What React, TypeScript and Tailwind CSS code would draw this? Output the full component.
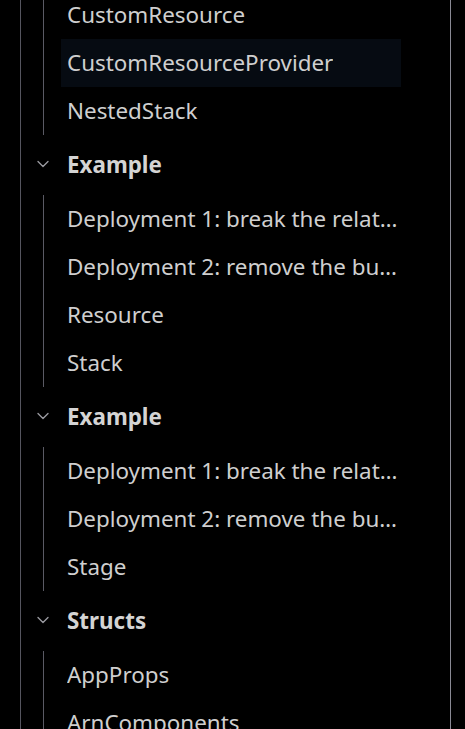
import { ChevronDown } from "lucide-react";

type Group = { title: string | null; items: string[]; active?: string };

const groups: Group[] = [
  {
    title: null,
    items: ["CustomResource", "CustomResourceProvider", "NestedStack"],
    active: "CustomResourceProvider",
  },
  {
    title: "Example",
    items: [
      "Deployment 1: break the relationship",
      "Deployment 2: remove the bucket",
      "Resource",
      "Stack",
    ],
  },
  {
    title: "Example",
    items: [
      "Deployment 1: break the relationship",
      "Deployment 2: remove the bucket",
      "Stage",
    ],
  },
  { title: "Structs", items: ["AppProps", "ArnComponents", "AssetOptions"] },
];

function Item({ label, active }: { label: string; active?: boolean }) {
  return (
    <div
      className={`w-[340px] h-[48px] flex items-center pl-[6px] pr-[1px] ${
        active ? "bg-[#060b12]" : ""
      }`}
    >
      <span className="truncate text-[#cfcfcf]">{label}</span>
    </div>
  );
}

export default function App() {
  return (
    <div
      className="h-[729px] w-[465px] overflow-hidden bg-black text-[22.4px]"
      style={{ fontFamily: '"Noto Sans", "Open Sans", sans-serif' }}
    >
      <div className="ml-[20px] w-[431px] min-h-full border-x border-l-[#55555f] border-r-[#8a8a95] -mt-[9px]">
        {groups.map((group, gi) => (
          <div key={gi}>
            {group.title && (
              <div className="h-[60px] flex items-center">
                <ChevronDown
                  className="ml-[12px] mr-[14px] w-[20px] h-[20px] text-[#9a9aa0] -mt-[2px]"
                  strokeWidth={1.6}
                />
                <span className="font-bold text-[#d4d4d4]">{group.title}</span>
              </div>
            )}
            <div className="ml-[22px] border-l border-[#5a5a64] pl-[17px]">
              {group.items.map((item) => (
                <Item key={item} label={item} active={item === group.active} />
              ))}
            </div>
          </div>
        ))}
      </div>
    </div>
  );
}
